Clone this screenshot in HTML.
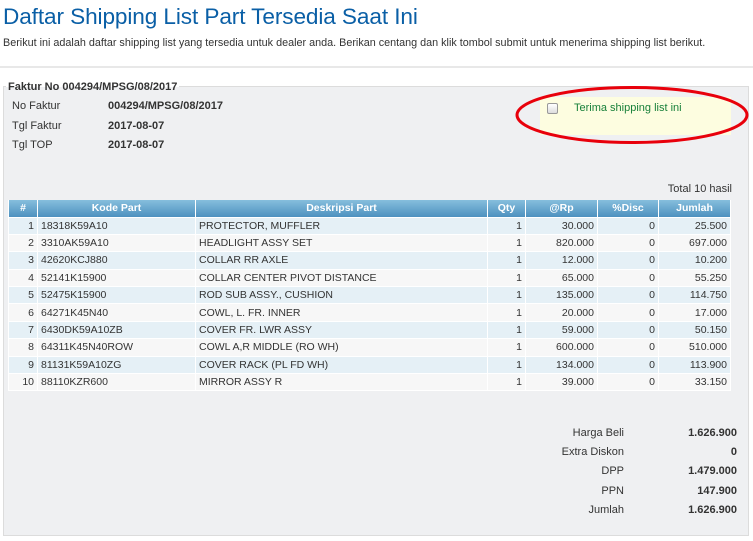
<!DOCTYPE html>
<html><head><meta charset="utf-8"><style>
*{margin:0;padding:0;box-sizing:border-box}
body{width:753px;height:541px;background:#fff;font-family:"Liberation Sans",sans-serif;color:#333;position:relative;overflow:hidden;font-size:11px}
.a{position:absolute;white-space:nowrap}
h1{position:absolute;left:3px;top:4px;font-weight:normal;font-size:22.6px;color:#0a5fa6;letter-spacing:-0.1px}
.hr{position:absolute;left:0;top:66px;width:753px;height:2px;background:#e8e8e8}
.fs{position:absolute;left:3px;top:86px;width:746px;height:450px;background:#eff0f2;border:1px solid #dcdcdc}
table{position:absolute;left:8px;top:200px;width:723px;border-collapse:collapse;font-size:10.5px}
th{height:17px;background:linear-gradient(#86bedd,#4d91bf);color:#fff;font-weight:bold;border:1px solid #fff;border-top:0;text-align:center;padding:0}
td{height:17.4px;border:1px solid #fff;padding:1px 3px 0;line-height:15px}
tr:nth-child(even) td{background:#e5f0f6}
tr:nth-child(odd) td{background:#f7f7f7}
.r{text-align:right}
</style></head><body>
<h1>Daftar Shipping List Part Tersedia Saat Ini</h1>
<div class="a" style="left:3px;top:37px;font-size:10.8px">Berikut ini adalah daftar shipping list yang tersedia untuk dealer anda. Berikan centang dan klik tombol submit untuk menerima shipping list berikut.</div>
<div class="hr"></div>
<div class="fs"></div>
<div class="a" style="left:6px;top:80px;padding:0 2px;font-weight:bold;font-size:11px;line-height:14px;background:linear-gradient(#fff 50%,#eff0f2 50%)">Faktur No 004294/MPSG/08/2017</div>
<div class="a" style="left:12px;top:100px">No Faktur</div><div class="a" style="left:108px;top:100px;font-weight:bold">004294/MPSG/08/2017</div>
<div class="a" style="left:12px;top:120px">Tgl Faktur</div><div class="a" style="left:108px;top:120px;font-weight:bold">2017-08-07</div>
<div class="a" style="left:12px;top:139px">Tgl TOP</div><div class="a" style="left:108px;top:139px;font-weight:bold">2017-08-07</div>
<div class="a" style="left:540px;top:97px;width:191px;height:38px;background:#fdfde0"></div>
<div class="a" style="left:547px;top:103px;width:11px;height:11px;border:1px solid #999;border-radius:2px;background:linear-gradient(#fff,#ddd)"></div>
<div class="a" style="left:574px;top:102px;color:#18803a">Terima shipping list ini</div>
<svg class="a" style="left:514px;top:84px" width="238" height="62"><ellipse cx="118" cy="31" rx="115" ry="27.5" fill="none" stroke="#e8000b" stroke-width="3"/></svg>
<div class="a" style="right:21px;top:183px">Total 10 hasil</div>
<table>
<tr><th style="width:29px">#</th><th style="width:158px">Kode Part</th><th style="width:292px">Deskripsi Part</th><th style="width:38px">Qty</th><th style="width:72px">@Rp</th><th style="width:61px">%Disc</th><th>Jumlah</th></tr>
<tr><td class="r">1</td><td>18318K59A10</td><td>PROTECTOR, MUFFLER</td><td class="r">1</td><td class="r">30.000</td><td class="r">0</td><td class="r">25.500</td></tr>
<tr><td class="r">2</td><td>3310AK59A10</td><td>HEADLIGHT ASSY SET</td><td class="r">1</td><td class="r">820.000</td><td class="r">0</td><td class="r">697.000</td></tr>
<tr><td class="r">3</td><td>42620KCJ880</td><td>COLLAR RR AXLE</td><td class="r">1</td><td class="r">12.000</td><td class="r">0</td><td class="r">10.200</td></tr>
<tr><td class="r">4</td><td>52141K15900</td><td>COLLAR CENTER PIVOT DISTANCE</td><td class="r">1</td><td class="r">65.000</td><td class="r">0</td><td class="r">55.250</td></tr>
<tr><td class="r">5</td><td>52475K15900</td><td>ROD SUB ASSY., CUSHION</td><td class="r">1</td><td class="r">135.000</td><td class="r">0</td><td class="r">114.750</td></tr>
<tr><td class="r">6</td><td>64271K45N40</td><td>COWL, L. FR. INNER</td><td class="r">1</td><td class="r">20.000</td><td class="r">0</td><td class="r">17.000</td></tr>
<tr><td class="r">7</td><td>6430DK59A10ZB</td><td>COVER FR. LWR ASSY</td><td class="r">1</td><td class="r">59.000</td><td class="r">0</td><td class="r">50.150</td></tr>
<tr><td class="r">8</td><td>64311K45N40ROW</td><td>COWL A,R MIDDLE (RO WH)</td><td class="r">1</td><td class="r">600.000</td><td class="r">0</td><td class="r">510.000</td></tr>
<tr><td class="r">9</td><td>81131K59A10ZG</td><td>COVER RACK (PL FD WH)</td><td class="r">1</td><td class="r">134.000</td><td class="r">0</td><td class="r">113.900</td></tr>
<tr><td class="r">10</td><td>88110KZR600</td><td>MIRROR ASSY R</td><td class="r">1</td><td class="r">39.000</td><td class="r">0</td><td class="r">33.150</td></tr>
</table>
<div class="a" style="right:129px;top:424px;text-align:right;line-height:19.2px">Harga Beli<br>Extra Diskon<br>DPP<br>PPN<br>Jumlah</div>
<div class="a" style="right:16px;top:424px;text-align:right;line-height:19.2px;font-weight:bold">1.626.900<br>0<br>1.479.000<br>147.900<br>1.626.900</div>
</body></html>
